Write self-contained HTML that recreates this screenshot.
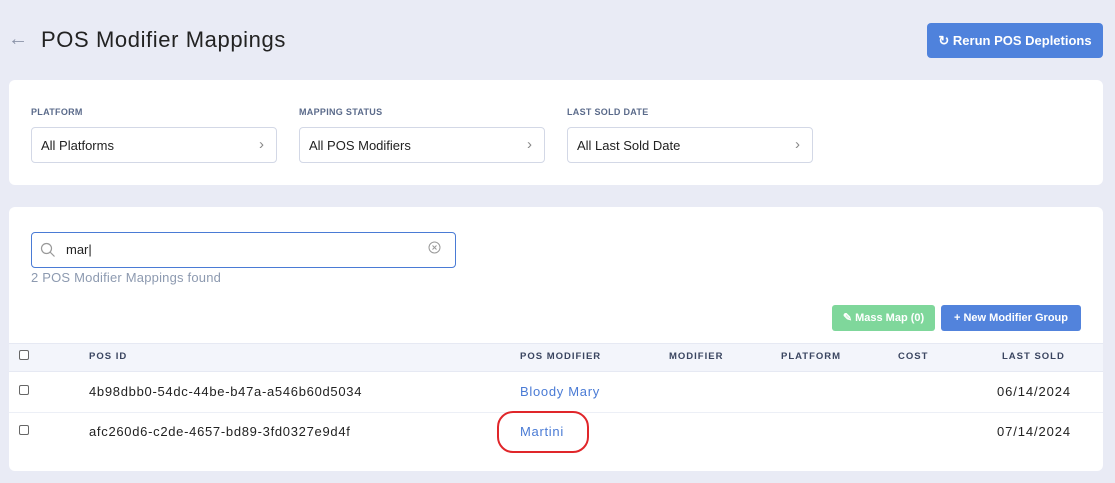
<!DOCTYPE html>
<html><head><style>
*{box-sizing:border-box;margin:0;padding:0}
body{width:1115px;height:483px;background:#e9ebf5;font-family:"Liberation Sans",sans-serif;position:relative;overflow:hidden;color:#222}
.abs{position:absolute}
.card{position:absolute;left:9px;width:1094px;background:#fff;border-radius:6px}
.lbl{position:absolute;top:107px;font-size:9px;font-weight:bold;color:#5a6a8a;letter-spacing:.3px}
.sel{position:absolute;top:127px;width:246px;height:36px;border:1px solid #d3d8e6;border-radius:4px;font-size:13px;padding:10px 9px;color:#222}
.sel:after{content:"›";position:absolute;right:12px;top:8px;color:#888;font-size:15px}
.th{position:absolute;top:351px;font-size:9.5px;font-weight:bold;color:#3a4560;letter-spacing:1px}
.td{position:absolute;font-size:13px;color:#222;letter-spacing:.7px}
.cb{position:absolute;left:19px;width:10px;height:10px;border:1px solid #666;border-radius:2px;background:#fff}
a{color:#4a7bd5;text-decoration:none}
</style></head><body>
<div class="abs" style="left:8px;top:28px;font-size:20px;color:#8b93a8">←</div>
<div class="abs" style="left:41px;top:27px;font-size:22px;color:#222;letter-spacing:.6px">POS Modifier Mappings</div>
<div class="abs" style="left:927px;top:23px;width:176px;height:35px;background:#4f82dc;border-radius:4px;color:#fff;font-size:13px;font-weight:bold;text-align:center;line-height:35px">↻ Rerun POS Depletions</div>

<div class="card" style="top:80px;height:105px"></div>
<div class="lbl" style="left:31px">PLATFORM</div>
<div class="lbl" style="left:299px">MAPPING STATUS</div>
<div class="lbl" style="left:567px">LAST SOLD DATE</div>
<div class="sel" style="left:31px">All Platforms</div>
<div class="sel" style="left:299px">All POS Modifiers</div>
<div class="sel" style="left:567px">All Last Sold Date</div>

<div class="card" style="top:207px;height:264px"></div>
<div class="abs" style="left:31px;top:232px;width:425px;height:36px;border:1px solid #4a7bd5;border-radius:4px"></div>
<svg class="abs" style="left:40px;top:242px" width="16" height="16" viewBox="0 0 16 16"><circle cx="6.5" cy="6.5" r="5" fill="none" stroke="#999" stroke-width="1.2"/><path d="M10 10l4.5 4.5" stroke="#999" stroke-width="1.2"/></svg>
<div class="abs" style="left:66px;top:242px;font-size:13px">mar|</div>
<svg class="abs" style="left:428px;top:241px" width="13" height="13" viewBox="0 0 13 13"><circle cx="6.5" cy="6.5" r="5.5" fill="none" stroke="#999"/><path d="M4.5 4.5l4 4M8.5 4.5l-4 4" stroke="#999"/></svg>
<div class="abs" style="left:31px;top:270px;font-size:13px;color:#8d9ab0;letter-spacing:.2px">2 POS Modifier Mappings found</div>

<div class="abs" style="left:832px;top:305px;width:103px;height:26px;background:#7fd79b;border-radius:3px;color:#fff;font-size:11px;font-weight:bold;text-align:center;line-height:26px">✎ Mass Map (0)</div>
<div class="abs" style="left:941px;top:305px;width:140px;height:26px;background:#5283dc;border-radius:3px;color:#fff;font-size:11px;font-weight:bold;text-align:center;line-height:26px">+ New Modifier Group</div>

<div class="abs" style="left:9px;top:343px;width:1094px;height:29px;background:#f3f5fb;border-top:1px solid #e6e9f3;border-bottom:1px solid #e6e9f3"></div>
<div class="cb" style="top:350px"></div>
<div class="th" style="left:89px">POS ID</div>
<div class="th" style="left:520px">POS MODIFIER</div>
<div class="th" style="left:669px">MODIFIER</div>
<div class="th" style="left:781px">PLATFORM</div>
<div class="th" style="left:898px">COST</div>
<div class="th" style="left:1002px">LAST SOLD</div>

<div class="cb" style="top:385px"></div>
<div class="td" style="left:89px;top:384px">4b98dbb0-54dc-44be-b47a-a546b60d5034</div>
<div class="td" style="left:520px;top:384px"><a>Bloody Mary</a></div>
<div class="td" style="left:997px;top:384px;letter-spacing:.9px">06/14/2024</div>
<div class="abs" style="left:9px;top:412px;width:1094px;height:1px;background:#eceff6"></div>
<div class="cb" style="top:425px"></div>
<div class="td" style="left:89px;top:424px">afc260d6-c2de-4657-bd89-3fd0327e9d4f</div>
<div class="td" style="left:520px;top:424px"><a>Martini</a></div>
<div class="td" style="left:997px;top:424px;letter-spacing:.9px">07/14/2024</div>
<div class="abs" style="left:497px;top:411px;width:92px;height:42px;border:2px solid #e0262a;border-radius:16px"></div>
</body></html>
